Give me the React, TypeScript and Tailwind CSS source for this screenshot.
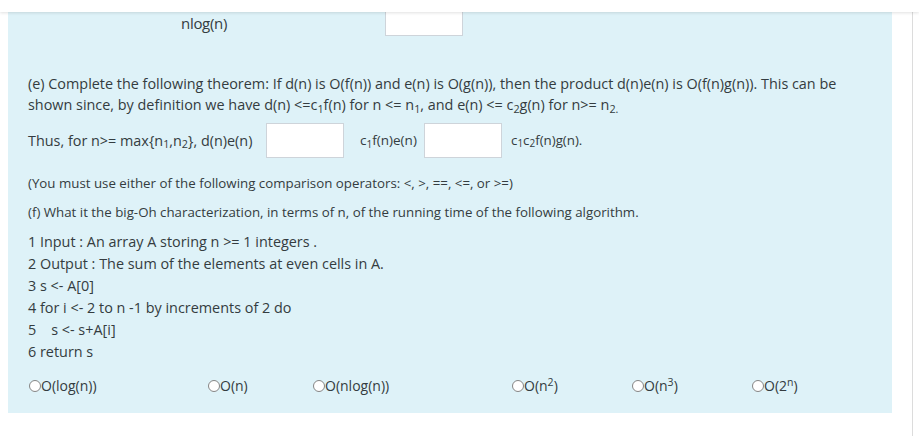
import React from 'react';

const Box = ({ className = '' }: { className?: string }) => (
  <div className={`w-[78px] bg-white border border-[#ced4da] ${className}`} />
);

const Radio = ({ children, width }: { children: React.ReactNode; width: string }) => (
  <div className={`flex items-center ${width}`}>
    <span className="h-[12px] w-[12px] rounded-full border border-[#858585] bg-white" />
    <span className="text-[14px]">{children}</span>
  </div>
);

export default function App() {
  return (
    <div className="relative h-[436px] w-[919px] overflow-hidden bg-white text-[#343c40] [font-family:'Open_Sans',sans-serif]">
      <div className="relative z-10 h-[12px] bg-white shadow-[0_1px_3px_rgba(0,0,0,0.12)]" />
      <div className="flex">
        <div className="ml-[8px] h-[401px] w-[884px] bg-[#def2f8] pl-[20px] text-[14.4px]">
          <div className="flex h-[24px] items-center">
            <span className="ml-[153px] w-[204px] pb-[2px] text-[15px] tracking-[-0.3px]">nlog(n)</span>
            <Box className="h-[24px] border-t-0" />
          </div>

          <p className="mt-[37px] w-[830px] leading-[21px]">
            (e) Complete the following theorem: If d(n) is O(f(n)) and e(n) is O(g(n)), then the product d(n)e(n) is
            O(f(n)g(n)). This can be shown since, by definition we have d(n) &lt;=c<sub>1</sub>f(n) for n &lt;= n
            <sub>1</sub>, and e(n) &lt;= c<sub>2</sub>g(n) for n&gt;= n<sub>2.</sub>
          </p>

          <div className="mt-[8px] flex items-center">
            <span className="w-[238px]">
              Thus, for n&gt;= max{'{'}n<sub>1</sub>,n<sub>2</sub>{'}'}, d(n)e(n)
            </span>
            <Box className="h-[35px]" />
            <span className="ml-[16px] w-[64px] text-[13.5px]">
              c<sub>1</sub>f(n)e(n)
            </span>
            <Box className="h-[35px]" />
            <span className="ml-[9px] text-[13.3px]">
              c<sub>1</sub>c<sub>2</sub>f(n)g(n).
            </span>
          </div>

          <p className="mt-[15px] text-[13.3px] leading-[20px]">
            (You must use either of the following comparison operators: &lt;, &gt;, ==, &lt;=, or &gt;=)
          </p>
          <p className="mt-[9px] text-[13.3px] leading-[20px]">
            (f) What it the big-Oh characterization, in terms of n, of the running time of the following algorithm.
          </p>

          <div className="mt-[9px] leading-[22px]">
            <div>1 Input : An array A storing n &gt;= 1 integers .</div>
            <div>2 Output : The sum of the elements at even cells in A.</div>
            <div>3 s &lt;- A[0]</div>
            <div>4 for i &lt;- 2 to n -1 by increments of 2 do</div>
            <div className="whitespace-pre">5    s &lt;- s+A[i]</div>
            <div>6 return s</div>
          </div>

          <div className="ml-px mt-[12px] flex">
            <Radio width="w-[179px]">O(log(n))</Radio>
            <Radio width="w-[105px]">O(n)</Radio>
            <Radio width="w-[199px]">O(nlog(n))</Radio>
            <Radio width="w-[120px]">
              O(n<sup>2</sup>)
            </Radio>
            <Radio width="w-[120px]">
              O(n<sup>3</sup>)
            </Radio>
            <Radio width="w-[100px]">
              O(2<sup>n</sup>)
            </Radio>
          </div>
        </div>
        <div className="ml-[20px] h-[424px] w-px bg-[#dcdcdc]" />
      </div>
    </div>
  );
}
